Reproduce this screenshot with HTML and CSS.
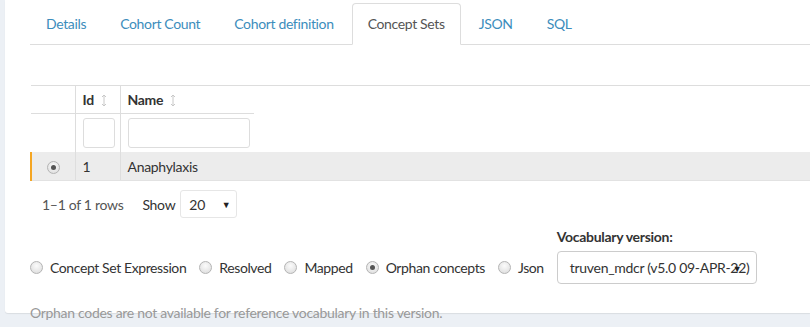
FILE: index.html
```html
<!DOCTYPE html>
<html>
<head>
<meta charset="utf-8">
<link rel="stylesheet" href="styles.css">
</head>
<body>
<div class="panel">
  <ul class="tabs">
    <li><a>Details</a></li>
    <li><a>Cohort Count</a></li>
    <li><a>Cohort definition</a></li>
    <li class="active"><a>Concept Sets</a></li>
    <li><a>JSON</a></li>
    <li><a>SQL</a></li>
  </ul>

  <table class="grid">
    <colgroup>
      <col class="w1"><col class="w2"><col class="w3"><col>
    </colgroup>
    <thead>
      <tr class="head">
        <th class="c1"></th>
        <th class="c2">Id <svg class="sort" width="6" height="13" viewBox="0 0 6 13"><path d="M3 1v11M1 3l2-2 2 2M1 10l2 2 2-2" fill="none" stroke="#c8c8c8" stroke-width="1"/></svg></th>
        <th class="c3">Name <svg class="sort" width="6" height="13" viewBox="0 0 6 13"><path d="M3 1v11M1 3l2-2 2 2M1 10l2 2 2-2" fill="none" stroke="#c8c8c8" stroke-width="1"/></svg></th>
        <th class="fill"></th>
      </tr>
      <tr class="filters">
        <td class="c1"></td>
        <td class="c2"><span class="finput id"></span></td>
        <td class="c3"><span class="finput name"></span></td>
        <td class="fill"></td>
      </tr>
    </thead>
    <tbody>
      <tr class="selected">
        <td class="c1"><span class="radio checked"></span></td>
        <td class="c2">1</td>
        <td class="c3">Anaphylaxis</td>
        <td class="fill"></td>
      </tr>
    </tbody>
  </table>

  <div class="pager">
    <span class="count">1–1 of 1 rows</span>
    <span class="show">Show</span>
    <span class="select small">20<span class="arrow">▼</span></span>
  </div>

  <div class="modes">
    <div class="radios">
      <label class="opt"><span class="radio"></span>Concept Set Expression</label>
      <label class="opt"><span class="radio"></span>Resolved</label>
      <label class="opt"><span class="radio"></span>Mapped</label>
      <label class="opt"><span class="radio checked"></span>Orphan concepts</label>
      <label class="opt"><span class="radio"></span>Json</label>
    </div>
    <div class="vocab">
      <div class="vlabel">Vocabulary version:</div>
      <span class="select big">truven_mdcr (v5.0 09-APR-22)<span class="arrow">▼</span></span>
    </div>
  </div>
</div>
<p class="note">Orphan codes are not available for reference vocabulary in this version.</p>
</body>
</html>
```

FILE: styles.css
```css
html, body {
  margin: 0;
  padding: 0;
}
body {
  background: #ecf0f5;
  font-family: "Lato", "Open Sans", sans-serif;
  font-size: 14px;
  letter-spacing: -0.3px;
  color: #333;
  overflow: hidden;
  width: 810px;
  height: 327px;
}
.panel {
  margin-left: 5px;
  height: 313px;
  box-sizing: border-box;
  background: #fff;
  border-bottom-left-radius: 3px;
  box-shadow: 0 1px 1px rgba(0,0,0,0.08);
  padding: 3px 0 0 25px;
}
.tabs {
  list-style: none;
  margin: 0;
  padding: 0;
  display: flex;
  border-bottom: 1px solid #ddd;
  letter-spacing: -0.35px;
}
.tabs li {
  margin-bottom: -1px;
}
.tabs a {
  display: block;
  padding: 10px 15px;
  line-height: 20px;
  margin-right: 2px;
  border: 1px solid transparent;
  border-radius: 4px 4px 0 0;
  color: #3c8dbc;
}
.tabs .active a {
  border-color: #ddd;
  border-bottom-color: #fff;
  background: #fff;
  color: #555;
}

.grid {
  margin-top: 40px;
  width: 100%;
  table-layout: fixed;
  border-collapse: collapse;
  border-top: 1px solid #ddd;
}
.w1 { width: 44px; }
.w2 { width: 45px; }
.w3 { width: 134px; }
.grid th, .grid td {
  padding: 0 0 0 7px;
  text-align: left;
  vertical-align: middle;
  white-space: nowrap;
}
.grid .c1 { padding: 0; text-align: center; }
.grid .c2, .grid .c3 { border-left: 1px solid #ddd; }
.head th {
  height: 27px;
  font-weight: bold;
  color: #333;
}
.head th.c1, .head th.c2, .head th.c3 {
  border-bottom: 1px solid #ddd;
}
.sort {
  vertical-align: -2px;
  margin-left: 4px;
}
.filters td {
  height: 38px;
}
.finput {
  display: block;
  height: 30px;
  box-sizing: border-box;
  border: 1px solid #ddd;
  border-radius: 3px;
  background: #fff;
}
.finput.id { width: 32px; }
.finput.name { width: 122px; }
.selected td {
  background: #ececec;
  height: 28px;
  border-bottom: 1px solid #e2e2e2;
}
.selected td.c2, .selected td.c3 { border-left-color: #dedede; }
.selected td.c1 {
  border-left: 2px solid #f5a623;
}

.radio {
  display: inline-block;
  width: 13px;
  height: 13px;
  box-sizing: border-box;
  border-radius: 50%;
  border: 1px solid #b4b4b4;
  background: radial-gradient(circle at 50% 35%, #fbfbfb 0%, #e4e4e4 70%, #d6d6d6 100%);
  vertical-align: middle;
  position: relative;
}
.radio.checked::after {
  content: "";
  position: absolute;
  left: 3px;
  top: 3px;
  width: 5px;
  height: 5px;
  border-radius: 50%;
  background: #555;
}

.pager {
  display: flex;
  align-items: center;
  margin-top: 9px;
  padding-left: 12px;
  color: #555;
}
.show {
  margin-left: 19px;
  margin-right: 5px;
  color: #333;
}
.select {
  display: inline-flex;
  align-items: center;
  position: relative;
  box-sizing: border-box;
  border: 1px solid #ddd;
  border-radius: 3px;
  background: #fff;
  color: #333;
  white-space: nowrap;
}
.select .arrow {
  position: absolute;
  font-size: 9px;
  color: #222;
}
.select.small {
  width: 57px;
  height: 28px;
  padding-left: 8px;
  border-color: #e6e6e6;
}
.select.small .arrow { right: 6px; top: 8px; }

.modes {
  display: flex;
  align-items: flex-end;
  margin-top: 11px;
}
.radios {
  display: flex;
  align-items: center;
  height: 33px;
  letter-spacing: -0.4px;
}
.opt {
  display: flex;
  align-items: center;
  margin-right: 13px;
  white-space: nowrap;
}
.opt .radio { margin-right: 7px; }
.vocab {
  margin-left: 0;
}
.vlabel {
  font-weight: bold;
  color: #333;
  margin-bottom: 6px;
  line-height: 16px;
}
.select.big {
  width: 200px;
  height: 33px;
  padding-left: 12px;
  border-color: #ccc;
  border-radius: 4px;
}
.select.big .arrow { left: 175px; top: 11px; }

.note {
  margin: -8px 0 0 30px;
  color: #999;
  line-height: 16px;
}
```
